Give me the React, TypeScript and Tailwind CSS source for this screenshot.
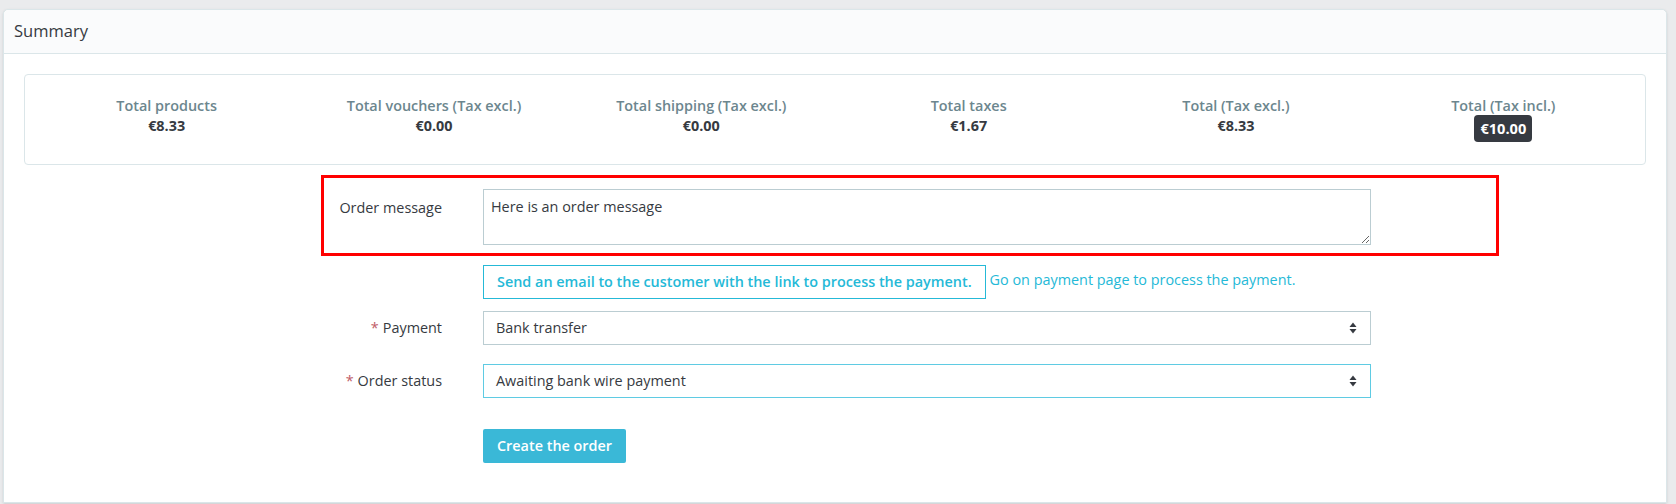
import React from 'react';

const totals = [
  { label: 'Total products', value: '€8.33' },
  { label: 'Total vouchers (Tax excl.)', value: '€0.00' },
  { label: 'Total shipping (Tax excl.)', value: '€0.00' },
  { label: 'Total taxes', value: '€1.67' },
  { label: 'Total (Tax excl.)', value: '€8.33' },
  { label: 'Total (Tax incl.)', value: '€10.00', badge: true },
];

function SelectArrows() {
  return (
    <svg width="8" height="12" viewBox="0 0 8 12" className="shrink-0">
      <path d="M4 0.5 L7.5 5 L0.5 5 Z" fill="#363a41" />
      <path d="M4 11.5 L7.5 7 L0.5 7 Z" fill="#363a41" />
    </svg>
  );
}

function FakeSelect({ value, focused }: { value: string; focused?: boolean }) {
  return (
    <div
      className={`w-[888px] h-[34px] bg-white border flex items-center justify-between pl-[12px] pr-[13px] text-[14.4px] text-[#363a41] ${
        focused ? 'border-[#5fcbe3]' : 'border-[#bbcdd2]'
      }`}
    >
      <span>{value}</span>
      <SelectArrows />
    </div>
  );
}

function Label({ text, required }: { text: string; required?: boolean }) {
  return (
    <div className="w-[118px] shrink-0 text-right text-[14.4px] text-[#363a41]">
      {required && <span className="text-[#c05c67] mr-[4px]">*</span>}
      {text}
    </div>
  );
}

export default function App() {
  return (
    <div
      className="w-[1676px] h-[504px] bg-[#eaebed] pt-[9px] pl-[3px] pr-[9px] overflow-hidden"
      style={{ fontFamily: '"Open Sans", "Noto Sans", sans-serif' }}
    >
      <div className="bg-white border border-[#dbe6e9] rounded-t-[5px] h-[494px] shadow-sm">
        <div className="h-[44px] bg-[#fafbfc] border-b border-[#dbe6e9] flex items-center px-[10px] rounded-t-[5px]">
          <h3 className="text-[16.5px] text-[#363a41]">Summary</h3>
        </div>

        <div className="px-[20px] pt-[20px]">
          <div className="border border-[#dbe6e9] rounded-[4px] pt-[22px] pb-[22px] px-[8px] grid grid-cols-6">
            {totals.map((t) => (
              <div key={t.label} className="flex flex-col items-center">
                <span className="text-[14.4px] leading-[18px] font-semibold text-[#6c868e]">{t.label}</span>
                {t.badge ? (
                  <span className="bg-[#363a41] text-white text-[14.6px] leading-[19px] font-bold px-[6px] py-[4px] rounded-[4px]">
                    {t.value}
                  </span>
                ) : (
                  <span className="text-[14.4px] leading-[22px] font-bold text-[#363a41]">{t.value}</span>
                )}
              </div>
            ))}
          </div>

          <div className="ml-[297px] w-[1178px] mt-[10px]">
            <div className="border-[3px] border-[#ff0000] pt-[11px] pb-[8px]">
              <div className="flex items-start gap-[41px]">
                <div className="pt-[8px]">
                  <Label text="Order message" />
                </div>
                <textarea
                  readOnly
                  defaultValue="Here is an order message"
                  className="w-[888px] h-[56px] border border-[#bbcdd2] px-[7px] py-[6px] text-[14.4px] text-[#363a41] outline-none resize-y"
                />
              </div>
            </div>

            <div className="px-[3px] mt-[9px] flex items-center gap-[41px]">
              <div className="w-[118px] shrink-0" />
              <div className="flex items-center gap-[4px]">
                <button className="h-[34px] px-[13px] border border-[#25b9d7] text-[#25b9d7] text-[14.4px] font-semibold bg-white">
                  Send an email to the customer with the link to process the payment.
                </button>
                <a className="text-[14.4px] text-[#25b9d7] mb-[4px]">Go on payment page to process the payment.</a>
              </div>
            </div>

            <div className="px-[3px] mt-[12px] flex items-center gap-[41px]">
              <Label text="Payment" required />
              <FakeSelect value="Bank transfer" />
            </div>

            <div className="px-[3px] mt-[19px] flex items-center gap-[41px]">
              <Label text="Order status" required />
              <FakeSelect value="Awaiting bank wire payment" focused />
            </div>

            <div className="px-[3px] mt-[31px] flex items-center gap-[41px]">
              <div className="w-[118px] shrink-0" />
              <button className="h-[34px] px-[14px] bg-[#3ab8d7] text-white text-[14.4px] font-semibold rounded-[2px]">
                Create the order
              </button>
            </div>
          </div>
        </div>
      </div>
    </div>
  );
}
